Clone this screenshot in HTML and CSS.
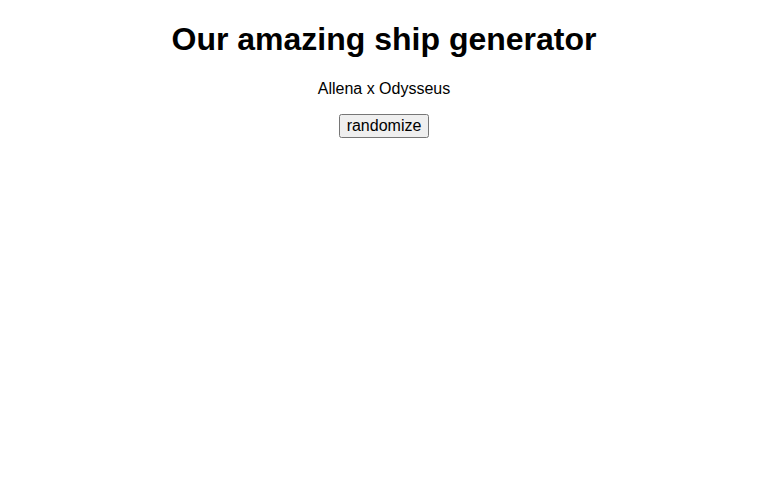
FILE: index.html
```html
<!DOCTYPE html>
<html lang="en">
<head>
  <meta charset="UTF-8">
  <meta name="viewport" content="width=device-width, initial-scale=1.0">
  <link rel="stylesheet" href="styles.css">
  <title>Ship generator</title>
</head>
<body>
  <h1>Our amazing ship generator</h1>
  <p class="ship">Allena x Odysseus</p>
  <p><button class="shuffle">randomize</button></p>
  <script>
    const names = ['Allena', 'Odysseus', 'Penelope', 'Circe', 'Telemachus', 'Athena', 'Calypso', 'Nausicaa'];
    const ship = document.querySelector('.ship');

    document.querySelector('.shuffle').addEventListener('click', () => {
      const a = names[Math.floor(Math.random() * names.length)];
      let b = a;
      while (b === a) b = names[Math.floor(Math.random() * names.length)];
      ship.textContent = `${a} x ${b}`;
    });
  </script>
</body>
</html>
```

FILE: styles.css
```css
body {
  margin: 0 8px;
  font-family: "Liberation Sans", Arial, sans-serif;
  text-align: center;
  color: #000;
}

h1 {
  margin-top: 0.67em;
}

.shuffle {
  font-family: inherit;
  font-size: 1rem;
}
```
